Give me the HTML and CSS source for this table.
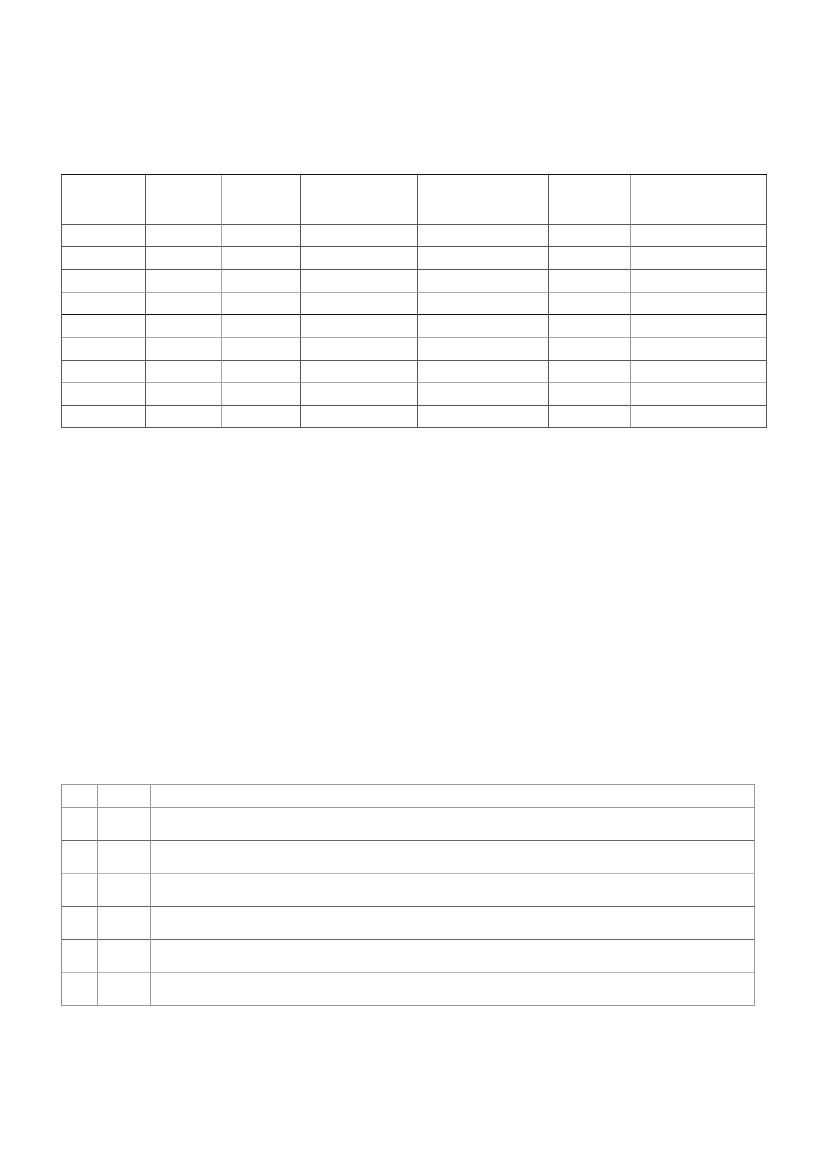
FILE: index.html
```html
<!DOCTYPE html>
<html lang="en">
<head>
<meta charset="utf-8">
<title>Tables</title>
<link rel="stylesheet" href="styles.css">
</head>
<body>
<div class="page">
  <div class="grid grid-a">
    <div class="row dark head"><div class="c"></div><div class="c"></div><div class="c"></div><div class="c"></div><div class="c"></div><div class="c"></div><div class="c"></div></div>
    <div class="row dark"><div class="c"></div><div class="c"></div><div class="c"></div><div class="c"></div><div class="c"></div><div class="c"></div><div class="c"></div></div>
    <div class="row dark"><div class="c"></div><div class="c"></div><div class="c"></div><div class="c"></div><div class="c"></div><div class="c"></div><div class="c"></div></div>
    <div class="row light"><div class="c"></div><div class="c"></div><div class="c"></div><div class="c"></div><div class="c"></div><div class="c"></div><div class="c"></div></div>
    <div class="row black"><div class="c"></div><div class="c"></div><div class="c"></div><div class="c"></div><div class="c"></div><div class="c"></div><div class="c"></div></div>
    <div class="row light"><div class="c"></div><div class="c"></div><div class="c"></div><div class="c"></div><div class="c"></div><div class="c"></div><div class="c"></div></div>
    <div class="row dark"><div class="c"></div><div class="c"></div><div class="c"></div><div class="c"></div><div class="c"></div><div class="c"></div><div class="c"></div></div>
    <div class="row light"><div class="c"></div><div class="c"></div><div class="c"></div><div class="c"></div><div class="c"></div><div class="c"></div><div class="c"></div></div>
    <div class="row dark"><div class="c"></div><div class="c"></div><div class="c"></div><div class="c"></div><div class="c"></div><div class="c"></div><div class="c"></div></div>
    <div class="row dark"><div class="c"></div><div class="c"></div><div class="c"></div><div class="c"></div><div class="c"></div><div class="c"></div><div class="c"></div></div>
  </div>

  <div class="grid grid-b">
    <div class="row mid"><div class="c"></div><div class="c"></div><div class="c"></div></div>
    <div class="row dark"><div class="c"></div><div class="c"></div><div class="c"></div></div>
    <div class="row light"><div class="c"></div><div class="c"></div><div class="c"></div></div>
    <div class="row dark"><div class="c"></div><div class="c"></div><div class="c"></div></div>
    <div class="row dark"><div class="c"></div><div class="c"></div><div class="c"></div></div>
    <div class="row light"><div class="c"></div><div class="c"></div><div class="c"></div></div>
    <div class="row mid"><div class="c"></div><div class="c"></div><div class="c"></div></div>
  </div>
</div>
</body>
</html>
```

FILE: styles.css
```css
html, body {
  margin: 0;
  padding: 0;
  background: #ffffff;
  font-family: "Liberation Sans", Arial, sans-serif;
}

.page {
  width: 826px;
  min-height: 1169px;
  padding-top: 174px;
  padding-left: 61px;
  box-sizing: border-box;
}

.grid {
  display: grid;
  box-sizing: border-box;
}

.row {
  display: contents;
}

.c {
  box-sizing: border-box;
  border-right: 1px solid #555555;
  border-bottom: 1px solid #555555;
}

/* ---------- first table ---------- */
.grid-a {
  width: 706px;
  border-top: 1px solid #111111;
  border-left: 1px solid #5a5a5a;
  grid-template-columns: 84px 76px 79px 117px 131px 82px 136px;
  grid-template-rows: 50px 22px 23px 23px 22px 23px 23px 22px 23px 22px;
}

.grid-a .row .c:nth-child(2) { border-right-color: #a8a8a8; }
.grid-a .row .c:nth-child(6) { border-right-color: #9a9a9a; }

.grid-a .row.dark .c { border-bottom-color: #555555; }
.grid-a .row.light .c { border-bottom-color: #aaaaaa; }
.grid-a .row.black .c { border-bottom-color: #111111; }

/* ---------- second table ---------- */
.grid-b {
  width: 694px;
  margin-top: 356px;
  border-top: 1px solid #999999;
  border-left: 1px solid #8c8c8c;
  grid-template-columns: 36px 53px 604px;
  grid-template-rows: 23px 33px 33px 33px 33px 33px 33px;
}

.grid-b .c { border-right-color: #9a9a9a; }
.grid-b .row.mid .c { border-bottom-color: #999999; }
.grid-b .row.dark .c { border-bottom-color: #666666; }
.grid-b .row.light .c { border-bottom-color: #b4b4b4; }
```
